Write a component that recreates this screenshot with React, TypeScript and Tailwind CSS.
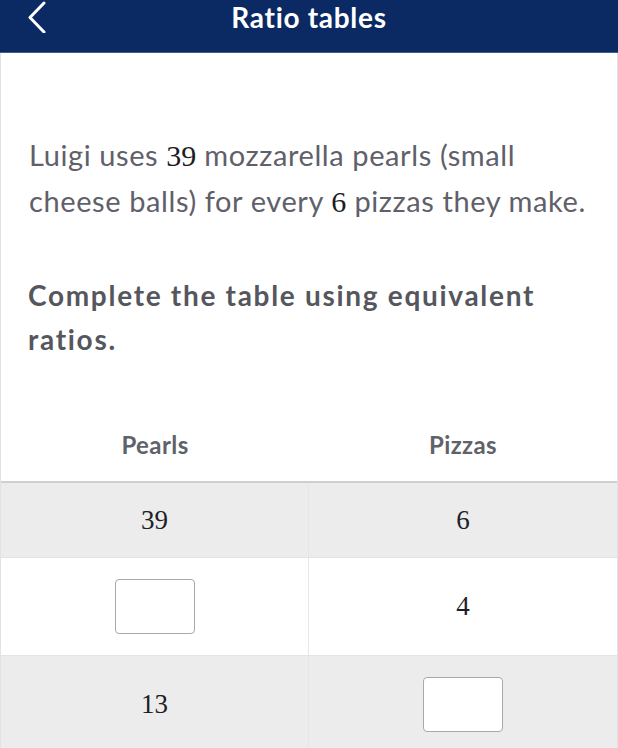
const sans = "font-['Lato','Noto_Sans',sans-serif]";
const math = "font-['Liberation_Serif','DejaVu_Serif',serif]";

function AnswerBox() {
    return <div className="w-[80px] h-[55px] rounded-[4px] border-[1.5px] border-[#a9a9ad] bg-white" />;
}

interface RowProps {
    left: React.ReactNode;
    right: React.ReactNode;
    shaded?: boolean;
    height: string;
}

function Row({ left, right, shaded, height }: RowProps) {
    return (
        <div className={`grid grid-cols-2 ${height} ${shaded ? "bg-[#ececec]" : "bg-white"} border-b border-[#e4e4e4]`}>
            <div className="flex items-center justify-center border-r border-[#e6e6e6]">{left}</div>
            <div className="flex items-center justify-center">{right}</div>
        </div>
    );
}

export default function App() {
    return (
        <div className={`w-[618px] h-[748px] overflow-hidden bg-white ${sans}`}>
            <header className="relative h-[53px] bg-[#0b2a63] border-b border-[#3b5c8f] flex justify-center">
                <svg className="absolute left-[25px] top-[1px]" width="24" height="32" viewBox="0 0 24 32">
                    <path d="M19 2 L5 16.5 L19 31" fill="none" stroke="white" strokeWidth="3" strokeLinecap="round" strokeLinejoin="round" />
                </svg>
                <h1 className="text-white text-[28px] font-bold leading-[34px] tracking-[0.7px]">Ratio tables</h1>
            </header>

            <main className="border-x border-[#e2e2e2] h-[695px]">
                <p className="pt-[79px] px-[28px] text-[29px] leading-[45px] tracking-[0.6px] text-[#5f6069]">
                    Luigi uses <span className={`${math} text-[#1c1c24] text-[30px] tracking-normal`}>39</span> mozzarella pearls (small
                    cheese balls) for every <span className={`${math} text-[#1c1c24] text-[30px] tracking-normal`}>6</span> pizzas they make.
                </p>

                <p className="mt-[49px] pl-[27px] pr-[20px] text-[28px] leading-[44px] font-bold tracking-[1.7px] text-[#55565e]">
                    Complete the table using equivalent ratios.
                </p>

                <div className="mt-[47px]">
                    <div className="grid grid-cols-2 h-[75px] border-b-2 border-[#cfcfcf] text-[24px] font-bold tracking-[0.4px] text-[#5f6269]">
                        <div className="flex items-center justify-center">Pearls</div>
                        <div className="flex items-center justify-center">Pizzas</div>
                    </div>
                    <div className={`${math} text-[27px] text-[#1e1e26]`}>
                        <Row height="h-[75px]" shaded left="39" right="6" />
                        <Row height="h-[98px]" left={<AnswerBox />} right="4" />
                        <Row height="h-[98px]" shaded left="13" right={<AnswerBox />} />
                    </div>
                </div>
            </main>
        </div>
    );
}
